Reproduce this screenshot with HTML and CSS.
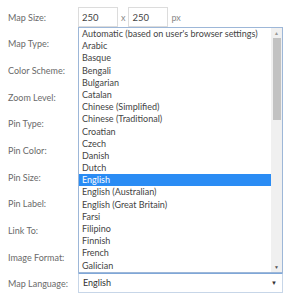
FILE: index.html
```html
<!DOCTYPE html>
<html>
<head>
    <meta charset="UTF-8">
    <title>Map Settings</title>
    <link rel="stylesheet" href="styles.css">
</head>
<body>
<form class="form">
    <div class="row">
        <label>Map Size:</label>
        <div class="ctl">
            <input class="inp" type="text" value="250">
            <span class="sep">x</span>
            <input class="inp" type="text" value="250">
            <span class="sep">px</span>
        </div>
    </div>
    <div class="row"><label>Map Type:</label></div>
    <div class="row"><label>Color Scheme:</label></div>
    <div class="row"><label>Zoom Level:</label></div>
    <div class="row"><label>Pin Type:</label></div>
    <div class="row"><label>Pin Color:</label></div>
    <div class="row"><label>Pin Size:</label></div>
    <div class="row"><label>Pin Label:</label></div>
    <div class="row"><label>Link To:</label></div>
    <div class="row"><label>Image Format:</label></div>
    <div class="row">
        <label>Map Language:</label>
        <div class="select">
            <span>English</span>
            <span class="caret">&#9660;</span>
        </div>
    </div>

    <!-- open dropdown of the language select -->
    <div class="list">
        <div class="items">
            <div class="item">Automatic (based on user's browser settings)</div>
            <div class="item">Arabic</div>
            <div class="item">Basque</div>
            <div class="item">Bengali</div>
            <div class="item">Bulgarian</div>
            <div class="item">Catalan</div>
            <div class="item">Chinese (Simplified)</div>
            <div class="item">Chinese (Traditional)</div>
            <div class="item">Croatian</div>
            <div class="item">Czech</div>
            <div class="item">Danish</div>
            <div class="item">Dutch</div>
            <div class="item active">English</div>
            <div class="item">English (Australian)</div>
            <div class="item">English (Great Britain)</div>
            <div class="item">Farsi</div>
            <div class="item">Filipino</div>
            <div class="item">Finnish</div>
            <div class="item">French</div>
            <div class="item">Galician</div>
        </div>
        <div class="scroll">
            <span class="arr">&#9650;</span>
            <div class="thumb"></div>
            <span class="arr down">&#9660;</span>
        </div>
    </div>
</form>
</body>
</html>
```

FILE: styles.css
```css
body {
    margin: 0;
    background: #fff;
    font-family: "Lato", "Open Sans", sans-serif;
    font-size: 9px;
    color: #555;
}

.form {
    position: relative;
    padding: 7px 0 0 8px;
}

.row {
    display: flex;
    align-items: center;
    height: 20px;
    margin-bottom: 6.7px;
}

label {
    width: 70px;
    white-space: nowrap;
    color: #6a6a6a;
}

.ctl {
    display: flex;
    align-items: center;
}

.inp {
    box-sizing: border-box;
    width: 40px;
    height: 20px;
    border: 1px solid #dcdcdc;
    padding: 0 3px;
    font-family: inherit;
    font-size: 9.5px;
    color: #444;
}

.sep {
    padding: 0 3px;
    color: #888;
}

.select {
    box-sizing: border-box;
    display: flex;
    justify-content: space-between;
    align-items: center;
    width: 205px;
    height: 20px;
    margin-top: -2px;
    padding: 0 5px 0 4px;
    border: 1px solid #c7d6e8;
    border-top-color: #7fa7d8;
    color: #333;
}

.caret {
    font-size: 6px;
    color: #333;
}

.list {
    position: absolute;
    left: 78px;
    top: 27px;
    box-sizing: border-box;
    width: 205px;
    height: 246px;
    display: flex;
    border: 1px solid #9db7d8;
    background: #fff;
}

.items {
    flex: 1;
}

.item {
    height: 12.2px;
    line-height: 12.2px;
    padding-left: 3px;
    color: #444;
    white-space: nowrap;
}

.item.active {
    background: #2a8cf4;
    color: #fff;
}

.scroll {
    width: 11px;
    display: flex;
    flex-direction: column;
    align-items: center;
    background: #f0f0f0;
}

.arr {
    font-size: 5px;
    color: #999;
    line-height: 10px;
}

.arr.down {
    margin-top: auto;
    color: #555;
}

.thumb {
    width: 8px;
    height: 82px;
    background: #c2c2c2;
}
```
